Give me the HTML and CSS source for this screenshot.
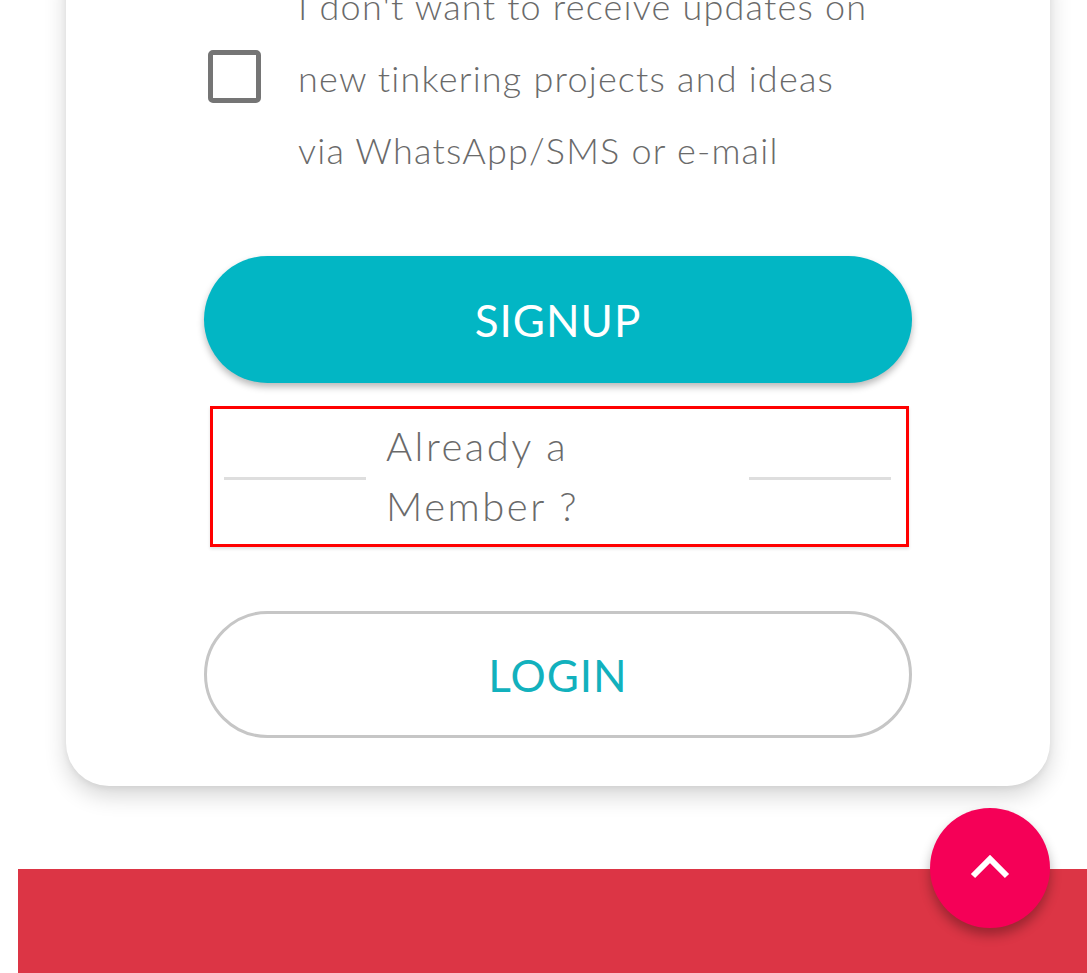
FILE: index.html
```html
<!DOCTYPE html>
<html lang="en">
<head>
<meta charset="utf-8">
<title>Signup</title>
<link rel="stylesheet" href="styles.css">
</head>
<body>
  <main class="page">
    <section class="card">
      <div class="consent">
        <span class="checkbox" role="checkbox" aria-checked="false"></span>
        <p class="consent-text">I don't want to receive updates on<br>new tinkering projects and ideas<br>via WhatsApp/SMS or e-mail</p>
      </div>
      <button class="btn btn-primary" type="button">SIGNUP</button>
      <div class="divider">
        <span class="rule"></span>
        <span class="divider-text">Already a<br>Member ?</span>
        <span class="rule"></span>
      </div>
      <button class="btn btn-outline" type="button">LOGIN</button>
    </section>
  </main>
  <footer class="footer"></footer>
  <a class="fab" href="#" aria-label="Back to top">
    <svg width="120" height="120" viewBox="0 0 120 120" aria-hidden="true">
      <polyline points="43,68 60,51 77,68" fill="none" stroke="#fff" stroke-width="6" stroke-linecap="butt" stroke-linejoin="miter"/>
    </svg>
  </a>
</body>
</html>
```

FILE: styles.css
```css
html, body {
  margin: 0;
  padding: 0;
  background: #ffffff;
  overflow: hidden;
  font-family: "Lato", "Open Sans", "Liberation Sans", sans-serif;
  font-weight: 300;
}

.page {
  display: flex;
  flex-direction: column;
}

.card {
  margin: -62px 37px 0 66px;
  padding: 32px 138px 48px;
  background: #ffffff;
  border-radius: 43px;
  box-shadow: 0 10px 22px rgba(0, 0, 0, 0.16), 0 2px 6px rgba(0, 0, 0, 0.06);
  display: flex;
  flex-direction: column;
}

.consent {
  display: flex;
  align-items: center;
  gap: 37px;
  padding-left: 4px;
}

.checkbox {
  flex: 0 0 auto;
  width: 43px;
  height: 43px;
  border: 5px solid #757575;
  border-radius: 5px;
  margin-top: -4px;
}

.consent-text {
  margin: 0;
  font-size: 36px;
  line-height: 72px;
  color: #6a6a6a;
  letter-spacing: 1.2px;
  white-space: nowrap;
}

.btn {
  display: flex;
  align-items: center;
  justify-content: center;
  width: 100%;
  height: 127px;
  border-radius: 64px;
  font-family: inherit;
  font-weight: 400;
  font-size: 44px;
  letter-spacing: 1px;
  cursor: pointer;
  box-sizing: border-box;
}

.btn-primary {
  margin-top: 70px;
  background: #02b6c4;
  color: #ffffff;
  border: none;
  box-shadow: 0 4px 7px rgba(0, 0, 0, 0.28);
}

.divider {
  margin: 23px 3px 0 6px;
  border: 3px solid #ff0000;
  padding: 7px 15px 8px 11px;
  display: flex;
  align-items: center;
  gap: 20px;
  box-shadow: 0 2px 3px rgba(0, 0, 0, 0.12);
}

.rule {
  flex: 0 0 142px;
  height: 3px;
  background: #dedede;
  margin-top: 5px;
}

.divider-text {
  flex: 1;
  font-size: 40px;
  line-height: 60px;
  color: #6a6a6a;
  letter-spacing: 2.5px;
}

.btn-outline {
  margin-top: 64px;
  background: #ffffff;
  color: #12b1bd;
  border: 3px solid #c6c6c6;
}

.footer {
  margin: 83px 0 0 18px;
  height: 140px;
  background: #dc3545;
}

.fab {
  position: fixed;
  right: 37px;
  bottom: 45px;
  width: 120px;
  height: 120px;
  border-radius: 50%;
  background: #f50057;
  box-shadow: 0 7px 12px rgba(0, 0, 0, 0.3);
  display: block;
}

.fab svg {
  display: block;
}
```
